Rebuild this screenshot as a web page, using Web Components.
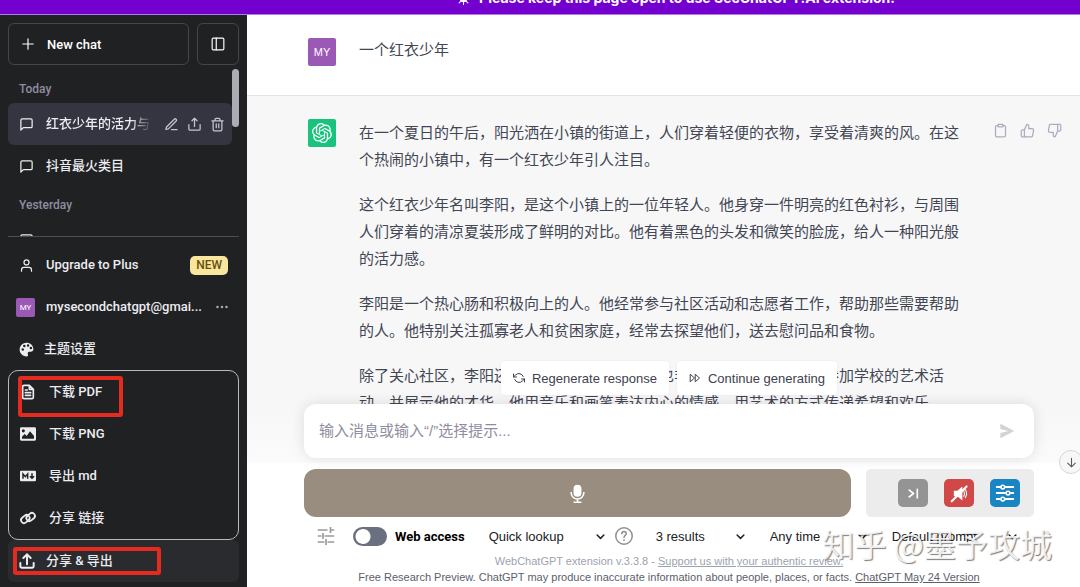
<!DOCTYPE html>
<html lang="zh-CN">
<head>
  <meta charset="utf-8">
  <title>ChatGPT</title>
  <style>
    html, body {
      margin: 0;
      height: 100%;
    }
    body {
      font-family: "Liberation Sans", "Noto Sans CJK SC", sans-serif;
      background: #fff;
      overflow: hidden;
    }
  </style>
</head>
<body>
  <chat-app></chat-app>

  <script>
    const ICONS = {
      plus: ['0 0 24 24', '<path d="M12 3v18M3 12h18"/>'],
      panel: ['0 0 24 24', '<rect x="2" y="2" width="20" height="20" rx="2"/><path d="M9 2v20"/>'],
      chat: ['0 0 24 24', '<path d="M21 15a2 2 0 0 1-2 2H7l-4 4V5a2 2 0 0 1 2-2h14a2 2 0 0 1 2 2z"/>'],
      edit: ['0 0 24 24', '<path d="M12 20h9M16.5 3.5a2.1 2.1 0 0 1 3 3L7 19l-4 1 1-4z"/>'],
      share: ['0 0 24 24', '<path d="M3 12v7a2 2 0 0 0 2 2h14a2 2 0 0 0 2-2v-7M16 6l-4-4-4 4M12 2v13"/>'],
      trash: ['0 0 24 24', '<path d="M3 6h18M19 6v14a2 2 0 0 1-2 2H7a2 2 0 0 1-2-2V6M8 6V4a2 2 0 0 1 2-2h4a2 2 0 0 1 2 2v2M10 11v6M14 11v6"/>'],
      user: ['0 0 24 24', '<path d="M20 21v-2a4 4 0 0 0-4-4H8a4 4 0 0 0-4 4v2"/><circle cx="12" cy="7" r="4"/>'],
      dots: ['0 0 24 24', '<g fill="currentColor" stroke="none"><circle cx="3" cy="12" r="2.500"/><circle cx="12" cy="12" r="2.500"/><circle cx="21" cy="12" r="2.500"/></g>'],
      palette: ['0 0 24 24', '<path fill="currentColor" stroke="none" fill-rule="evenodd" d="M12 1C5.900 1 1 5.900 1 12s4.900 11 11 11c1.700 0 2.700-1.200 2.400-2.800-.4-1.800-.8-2.700.2-3.800 1-1.200 2.500-.9 4.200-.9 2.600 0 4.200-1.400 4.200-4C23 5.300 18 1 12 1zM6 14a2 2 0 1 1 0-4 2 2 0 0 1 0 4zm2.500-5.500a2 2 0 1 1 0-4 2 2 0 0 1 0 4zm6-1a2 2 0 1 1 0-4 2 2 0 0 1 0 4zm4.500 4a2 2 0 1 1 0-4 2 2 0 0 1 0 4z"/>'],
      file: ['0 0 24 24', '<path stroke-width="2.500" d="M14 2H6a2 2 0 0 0-2 2v16a2 2 0 0 0 2 2h12a2 2 0 0 0 2-2V8zM14 2v6h6M8 9h3M8 13h8M8 17h8"/>'],
      image: ['0 0 24 24', '<path fill="currentColor" stroke="none" fill-rule="evenodd" d="M2 2h20a2 2 0 0 1 2 2v16a2 2 0 0 1-2 2H2a2 2 0 0 1-2-2V4a2 2 0 0 1 2-2zm3 3a2.300 2.300 0 1 0 0 4.600A2.300 2.300 0 0 0 5 5zM3 19h18v-4l-6-7-5 7-3-3-4 4z"/>'],
      markdown: ['0 0 24 24', '<rect x="0" y="4" width="24" height="16" rx="2" fill="currentColor" stroke="none"/><path stroke="#202123" stroke-width="2.200" stroke-linecap="butt" stroke-linejoin="miter" d="M4.500 16V9l3.500 4 3.500-4v7M18 8v7M15 12.500l3 3 3-3"/>'],
      link: ['0 0 24 24', '<g stroke-width="2.600"><rect x="1" y="9" width="14" height="9" rx="4.500" transform="rotate(-40 8 13.500)"/><rect x="9" y="6" width="14" height="9" rx="4.500" transform="rotate(-40 16 10.500)"/></g>'],
      upload: ['0 0 24 24', '<path stroke-width="3" d="M2 15v5a2 2 0 0 0 2 2h16a2 2 0 0 0 2-2v-5M6.500 7.500L12 2l5.500 5.500M12 2v15"/>'],
      openai: ['0 0 24 24', '<path fill="currentColor" stroke="none" d="M22.2819 9.8211a5.9847 5.9847 0 0 0-.5157-4.9108 6.0462 6.0462 0 0 0-6.5098-2.9A6.0651 6.0651 0 0 0 4.9807 4.1818a5.9847 5.9847 0 0 0-3.9977 2.9 6.0462 6.0462 0 0 0 .7427 7.0966 5.98 5.98 0 0 0 .511 4.9107 6.051 6.051 0 0 0 6.5146 2.9001A5.9847 5.9847 0 0 0 13.2599 24a6.0557 6.0557 0 0 0 5.7718-4.2058 5.9894 5.9894 0 0 0 3.9977-2.9001 6.0557 6.0557 0 0 0-.7475-7.0729zm-9.022 12.6081a4.4755 4.4755 0 0 1-2.8764-1.0408l.1419-.0804 4.7783-2.7582a.7948.7948 0 0 0 .3927-.6813v-6.7369l2.02 1.1686a.071.071 0 0 1 .038.052v5.5826a4.504 4.504 0 0 1-4.4945 4.4944zm-9.6607-4.1254a4.4708 4.4708 0 0 1-.5346-3.0137l.142.0852 4.783 2.7582a.7712.7712 0 0 0 .7806 0l5.8428-3.3685v2.3324a.0804.0804 0 0 1-.0332.0615L9.74 19.9502a4.4992 4.4992 0 0 1-6.1408-1.6464zM2.3408 7.8956a4.485 4.485 0 0 1 2.3655-1.9728V11.6a.7664.7664 0 0 0 .3879.6765l5.8144 3.3543-2.0201 1.1685a.0757.0757 0 0 1-.071 0l-4.8303-2.7865A4.504 4.504 0 0 1 2.3408 7.872zm16.5963 3.8558L13.1038 8.364 15.1192 7.2a.0757.0757 0 0 1 .071 0l4.8303 2.7913a4.4944 4.4944 0 0 1-.6765 8.1042v-5.6772a.79.79 0 0 0-.407-.667zm2.0107-3.0231l-.142-.0852-4.7735-2.7818a.7759.7759 0 0 0-.7854 0L9.409 9.2297V6.8974a.0662.0662 0 0 1 .0284-.0615l4.8303-2.7866a4.4992 4.4992 0 0 1 6.6802 4.66zM8.3065 12.863l-2.02-1.1638a.0804.0804 0 0 1-.038-.0567V6.0742a4.4992 4.4992 0 0 1 7.3757-3.4537l-.142.0805L8.704 5.459a.7948.7948 0 0 0-.3927.6813zm1.0976-2.3654l2.602-1.4998 2.6069 1.4998v2.9994l-2.5974 1.4997-2.6067-1.4997Z"/>'],
      clipboard: ['0 0 24 24', '<path d="M16 4h2a2 2 0 0 1 2 2v14a2 2 0 0 1-2 2H6a2 2 0 0 1-2-2V6a2 2 0 0 1 2-2h2"/><rect x="8" y="2" width="8" height="4" rx="1"/>'],
      up: ['0 0 24 24', '<path d="M14 9V5a3 3 0 0 0-3-3l-4 9v11h11.280a2 2 0 0 0 2-1.700l1.380-9a2 2 0 0 0-2-2.300zM7 22H4a2 2 0 0 1-2-2v-7a2 2 0 0 1 2-2h3"/>'],
      down: ['0 0 24 24', '<path d="M10 15v4a3 3 0 0 0 3 3l4-9V2H5.720a2 2 0 0 0-2 1.700l-1.380 9a2 2 0 0 0 2 2.300zM17 2h2.670A2.310 2.310 0 0 1 22 4v7a2.310 2.310 0 0 1-2.330 2H17"/>'],
      refresh: ['0 0 24 24', '<path d="M1 4v6h6M23 20v-6h-6M20.490 9A9 9 0 0 0 5.640 5.640L1 10m22 4-4.640 4.360A9 9 0 0 1 3.510 15"/>'],
      forward: ['0 0 24 24', '<path d="M3 5l8 7-8 7zM13 5l8 7-8 7z"/>'],
      send: ['0 0 24 24', '<path fill="currentColor" stroke="none" d="M2 1l21 11L2 23v-8l12-3L2 9z"/>'],
      arrow: ['0 0 24 24', '<path d="M12 4v16M5 13l7 7 7-7"/>'],
      mic: ['0 0 24 24', '<rect x="7" y="1" width="10" height="15" rx="5" fill="currentColor" stroke="none"/><path stroke-linecap="butt" d="M4 10v1a8 8 0 0 0 16 0v-1M12 19v4M7 23h10"/>'],
      skip: ['0 0 24 24', '<path stroke-width="3" stroke-linecap="butt" d="M3 5l9 7-9 7M19 3v18"/>'],
      mute: ['0 0 24 24', '<path fill="currentColor" stroke="none" d="M4 8h5l7-6v20l-7-6H4z"/><path stroke-width="3" d="M1 23L22 2"/><path stroke-width="1.500" d="M18 8q2 4 0 8M20 6q4 6 0 12"/>'],
      options: ['0 0 24 24', '<path stroke-width="2.500" d="M1 4h5M12 4h11M1 12h11M20 12h3M1 20h4M12 20h11"/><circle cx="9" cy="4" r="2.500"/><circle cx="16" cy="12" r="2.500"/><circle cx="9" cy="20" r="2.500"/>'],
      tune: ['0 0 24 24', '<path stroke-linecap="butt" stroke-width="2.200" d="M1 4h13M18 4h5M18 0v8M1 12h5M10 12h13M8 8v8M1 20h9M14 20h9M12 16v8"/>'],
      help: ['0 0 24 24', '<circle cx="12" cy="12" r="11"/><path d="M9 9a3 3 0 0 1 6 0c0 2-3 2.500-3 5M12 17v1"/>'],
      chevron: ['0 0 24 24', '<path stroke-width="4" d="M3 8l9 9 9-9"/>'],
      bulb: ['0 0 24 24', '<path d="M12 1v22M1 12h22M4 4l16 16M20 4L4 20"/><circle cx="12" cy="12" r="6" fill="currentColor"/>']
    };

    class BaseElement extends HTMLElement {
      constructor() {
        super();
        this.attachShadow({ mode: 'open' });
      }

      connectedCallback() {
        this.shadowRoot.innerHTML = `<style>${this.css()}</style>${this.template()}`;
      }
    }

    class UiIcon extends BaseElement {
      css() {
        return `
          :host { display: block; flex: none; width: var(--size, 16px); height: var(--size, 16px); }
          svg { display: block; width: 100%; height: 100%; overflow: visible; }
        `;
      }

      template() {
        const [box, body] = ICONS[this.getAttribute('name')];
        return `<svg viewBox="${box}" fill="none" stroke="currentColor" stroke-width="2" stroke-linecap="round" stroke-linejoin="round" aria-hidden="true">${body}</svg>`;
      }
    }
    customElements.define('ui-icon', UiIcon);

    class NoticeBar extends BaseElement {
      css() {
        return `
          :host {
            display: flex;
            justify-content: center;
            align-items: flex-end;
            flex: none;
            height: 14px;
            padding-left: 272px;
            overflow: hidden;
            background: #7400cf;
            border-bottom: 1px solid #b27be0;
            color: #fff;
            font-family: Inter, sans-serif;
            font-size: 14px;
            font-weight: 700;
          }
          p { display: flex; align-items: center; gap: 9px; margin: 0; padding: 0 0 6px; line-height: 20px; white-space: nowrap; }
          ui-icon { --size: 13px; }
        `;
      }

      template() {
        return `<p><ui-icon name="bulb"></ui-icon><slot></slot></p>`;
      }
    }
    customElements.define('notice-bar', NoticeBar);

    class UserBadge extends BaseElement {
      css() {
        return `
          :host {
            display: flex;
            align-items: center;
            justify-content: center;
            flex: none;
            width: var(--badge, 28px);
            height: var(--badge, 28px);
            border-radius: 2px;
            background: var(--badge-bg, #9b59b6);
            color: #fff;
            font-size: var(--badge-font, 11px);
            font-weight: 400;
          }
        `;
      }

      template() {
        return `<slot></slot>`;
      }
    }
    customElements.define('user-badge', UserBadge);

    // One line of the sidebar: icon, label and whatever is slotted at the end
    class NavRow extends BaseElement {
      css() {
        return `
          :host { display: flex; align-items: center; height: 42px; border-radius: 6px; padding: 0 11px; box-sizing: border-box; }
          :host([active]) { background: #343541; }
          :host([hover]) { background: #2a2b2e; }
          button {
            display: flex;
            align-items: center;
            flex: 1;
            min-width: 0;
            height: 100%;
            padding: 0;
            border: 0;
            background: none;
            color: inherit;
            font: inherit;
            text-align: left;
          }
          .lead { display: flex; flex: none; width: var(--lead, 27px); }
          .lead ui-icon { --size: var(--lead-icon, 15px); }
          .text { flex: 1; min-width: 0; overflow: hidden; white-space: nowrap; line-height: 20px; }
          :host([active]) .text {
            -webkit-mask-image: linear-gradient(to right, #000 80%, transparent);
            mask-image: linear-gradient(to right, #000 80%, transparent);
          }
        `;
      }

      template() {
        const icon = this.getAttribute('icon');
        return `
          <button type="button">
            <span class="lead"><slot name="lead">${icon ? `<ui-icon name="${icon}"></ui-icon>` : ''}</slot></span>
            <span class="text"><slot></slot></span>
          </button>
          <slot name="end"></slot>
        `;
      }
    }
    customElements.define('nav-row', NavRow);

    class SideBar extends BaseElement {
      css() {
        return `
          :host {
            display: flex;
            flex-direction: column;
            flex: none;
            width: 247px;
            box-sizing: border-box;
            padding: 8px 8px 5px;
            background: #202123;
            color: #ececf1;
            font-family: Roboto, "Noto Sans CJK SC", sans-serif;
            font-size: 13px;
            font-weight: 500;
            overflow: hidden;
          }
          header { display: flex; gap: 8px; flex: none; }
          header button {
            display: flex;
            align-items: center;
            height: 42px;
            box-sizing: border-box;
            border: 1px solid #45464a;
            border-radius: 6px;
            background: none;
            color: #fff;
            font: inherit;
            padding: 0 13px;
            gap: 12px;
          }
          header button:first-child { flex: 1; padding-left: 12px; }
          header ui-icon { --size: 14px; }
          .history { display: flex; flex: 1; min-height: 0; overflow: hidden; }
          .list { flex: 1; min-width: 0; padding-top: 12px; }
          h2 { margin: 0; padding: 0 11px 2px; font-size: 12px; font-weight: 500; line-height: 24px; color: #8e8ea0; }
          .group { margin-bottom: 6px; }
          .thumb { flex: none; width: 7px; height: 58px; margin-top: 4px; border-radius: 4px; background: #acacb5; }
          .tools { display: flex; gap: 8px; margin-left: 12px; color: #c5c5d2; }
          .tools button { display: flex; padding: 0; border: 0; background: none; color: inherit; }
          .tools ui-icon { --size: 15px; }
          .list nav-row[active] { padding-right: 7px; }
          nav { flex: none; border-top: 1px solid #4d4d4f; padding-top: 7px; }
          .new { padding: 0 6px; border-radius: 5px; background: #fae69e; color: #66510f; font-size: 12px; line-height: 19px; }
          user-badge { --badge: 19px; --badge-font: 8px; margin-left: -3px; }
          .more { --size: 12px; color: #acacb5; }
          .export { border: 1px solid #b9b9bd; border-radius: 10px; position: relative; }
          .export nav-row { --lead: 29px; --lead-icon: 16px; }
          .theme { --lead: 25px; }
          .share { position: relative; --lead-icon: 16px; }
          .mark { position: absolute; box-sizing: border-box; border: 4px solid #e52b20; border-radius: 3px; pointer-events: none; }
          .mark.pdf { left: 9px; top: 5px; width: 105px; height: 41px; }
          .mark.out { left: 5px; top: 7px; width: 148px; height: 28px; }
        `;
      }

      template() {
        return `
          <header>
            <button type="button"><ui-icon name="plus"></ui-icon>New chat</button>
            <button type="button" aria-label="Hide sidebar"><ui-icon name="panel"></ui-icon></button>
          </header>
          <div class="history">
            <div class="list">
              <div class="group">
                <h2>Today</h2>
                <nav-row active icon="chat">红衣少年的活力与
                  <span class="tools" slot="end">
                    <button type="button" aria-label="Edit"><ui-icon name="edit"></ui-icon></button>
                    <button type="button" aria-label="Share"><ui-icon name="share"></ui-icon></button>
                    <button type="button" aria-label="Delete"><ui-icon name="trash"></ui-icon></button>
                  </span>
                </nav-row>
                <nav-row icon="chat">抖音最火类目</nav-row>
              </div>
              <div class="group">
                <h2>Yesterday</h2>
                <nav-row icon="chat"></nav-row>
              </div>
            </div>
            <div class="thumb"></div>
          </div>
          <nav>
            <nav-row icon="user">Upgrade to Plus<span class="new" slot="end">NEW</span></nav-row>
            <nav-row><user-badge slot="lead">MY</user-badge>mysecondchatgpt@gmai...<ui-icon class="more" slot="end" name="dots"></ui-icon></nav-row>
            <nav-row class="theme" icon="palette">主题设置</nav-row>
            <div class="export">
              <nav-row icon="file">下载 PDF</nav-row>
              <nav-row icon="image">下载 PNG</nav-row>
              <nav-row icon="markdown">导出 md</nav-row>
              <nav-row icon="link">分享 链接</nav-row>
              <span class="mark pdf"></span>
            </div>
            <nav-row class="share" hover icon="upload">分享 &amp; 导出<span class="mark out" slot="end"></span></nav-row>
          </nav>
        `;
      }
    }
    customElements.define('side-bar', SideBar);

    class ChatMessage extends BaseElement {
      css() {
        return `
          :host {
            display: grid;
            grid-template-columns: 28px minmax(0, 1fr) 68px;
            column-gap: 23px;
            align-items: start;
            padding: 23px 19px 29px 61px;
            border-bottom: 1px solid #e3e3e5;
            color: #424653;
            font-size: 15px;
            line-height: 24px;
          }
          :host([role="assistant"]) { background: #f7f7f8; border: 0; line-height: 27px; }
          user-badge { --badge-bg: var(--avatar); }
          .icon { --size: 20px; }
          .tools { display: flex; gap: 12px; padding-top: 4px; color: #acacbe; }
          .tools button { display: flex; padding: 0; border: 0; background: none; color: inherit; }
          .tools ui-icon { --size: 15px; }
        `;
      }

      template() {
        const bot = this.getAttribute('role') === 'assistant';
        return `
          <user-badge style="--avatar: ${bot ? '#19c37d' : '#9b59b6'}">${bot ? '<ui-icon class="icon" name="openai"></ui-icon>' : 'MY'}</user-badge>
          <div><slot></slot></div>
          ${bot ? `
            <div class="tools">
              <button type="button" aria-label="Copy"><ui-icon name="clipboard"></ui-icon></button>
              <button type="button" aria-label="Good"><ui-icon name="up"></ui-icon></button>
              <button type="button" aria-label="Bad"><ui-icon name="down"></ui-icon></button>
            </div>` : ''}
        `;
      }
    }
    customElements.define('chat-message', ChatMessage);

    class OptionSelect extends BaseElement {
      css() {
        return `
          :host { display: grid; align-items: center; color: #202123; }
          select {
            grid-area: 1 / 1;
            appearance: none;
            width: 100%;
            height: 24px;
            padding: 0 20px 0 0;
            border: 0;
            background: none;
            color: inherit;
            font: 13px "Liberation Sans", sans-serif;
          }
          ui-icon { --size: 9px; grid-area: 1 / 1; justify-self: end; pointer-events: none; }
        `;
      }

      template() {
        const value = this.getAttribute('value');
        return `<select aria-label="${this.getAttribute('label')}"><option>${value}</option></select><ui-icon name="chevron"></ui-icon>`;
      }
    }
    customElements.define('option-select', OptionSelect);

    class ChatComposer extends BaseElement {
      css() {
        return `
          :host {
            display: block;
            position: absolute;
            left: 0;
            right: 0;
            bottom: 0;
            padding: 0 46px 2px 57px;
            background: linear-gradient(to bottom, transparent 43px, #fff 160px);
          }
          button { font: inherit; border: 0; }
          .actions { display: flex; justify-content: center; gap: 8px; }
          .actions button {
            display: flex;
            align-items: center;
            gap: 7px;
            height: 34px;
            padding: 0 12px;
            border-radius: 4px;
            background: #fff;
            color: #40414f;
            font-size: 13px;
            box-shadow: 0 0 3px rgba(0, 0, 0, .06);
          }
          .actions ui-icon { --size: 12px; }
          .prompt {
            display: flex;
            align-items: center;
            height: 54px;
            margin-top: 9px;
            padding: 0 19px 0 15px;
            border-radius: 12px;
            background: #fff;
            box-shadow: 0 0 14px rgba(0, 0, 0, .12);
          }
          textarea {
            flex: 1;
            height: 24px;
            padding: 0;
            border: 0;
            outline: 0;
            resize: none;
            background: none;
            font: 15px/24px "Liberation Sans", "Noto Sans CJK SC", sans-serif;
          }
          textarea::placeholder { color: #8e8ea0; }
          .prompt button { display: flex; padding: 0; background: none; color: #d2d2d8; }
          .voice { display: flex; gap: 15px; margin-top: 11px; height: 48px; }
          .talk { display: flex; align-items: center; justify-content: center; flex: 1; border-radius: 12px; background: #998d7f; color: #fff; }
          .talk ui-icon { --size: 19px; }
          .panel { display: flex; align-items: center; gap: 16px; padding: 0 14px 0 32px; border-radius: 5px; background: #ececec; }
          .panel button { display: flex; align-items: center; justify-content: center; width: 30px; height: 28px; padding: 0; border-radius: 5px; color: #fff; }
          .skip { --size: 13px; background: #949494; }
          .mute { --size: 17px; background: #d04848; }
          .opts { --size: 18px; background: #1985c3; }
          .settings { display: flex; align-items: center; box-sizing: border-box; height: 36px; padding: 2px 17px 0 13px; font-size: 13px; }
          .tune { --size: 18px; color: #9a9a9f; margin-right: 18px; }
          .access { display: flex; align-items: center; gap: 8px; font-family: Roboto, sans-serif; font-weight: 700; margin-right: 24px; white-space: nowrap; }
          .access input {
            appearance: none;
            width: 34px;
            height: 19px;
            margin: 0;
            border-radius: 10px;
            border: 2px solid #6b7080;
            background: radial-gradient(circle at 8px 50%, #fff 7px, #6b7080 8px);
          }
          .lookup { width: 116px; }
          .help { --size: 18px; color: #8f8f95; margin: 0 23px 0 10px; }
          .results { width: 89px; margin-right: 25px; }
          .time { width: 97px; margin-right: 25px; }
          .default { flex: 1; }
          p { margin: 0; text-align: center; font-size: 11px; line-height: 16px; white-space: nowrap; color: #5c5e6b; }
          p.ext { color: #9ca3b0; }
          a { color: inherit; }
        `;
      }

      template() {
        return `
          <div class="actions">
            <button type="button"><ui-icon name="refresh"></ui-icon>Regenerate response</button>
            <button type="button"><ui-icon name="forward"></ui-icon>Continue generating</button>
          </div>
          <div class="prompt">
            <textarea rows="1" aria-label="Message" placeholder="输入消息或输入“/”选择提示..."></textarea>
            <button type="button" aria-label="Send"><ui-icon name="send"></ui-icon></button>
          </div>
          <div class="voice">
            <button class="talk" type="button" aria-label="Speak"><ui-icon name="mic"></ui-icon></button>
            <div class="panel">
              <button class="skip" type="button" aria-label="Skip"><ui-icon name="skip"></ui-icon></button>
              <button class="mute" type="button" aria-label="Mute"><ui-icon name="mute"></ui-icon></button>
              <button class="opts" type="button" aria-label="Settings"><ui-icon name="options"></ui-icon></button>
            </div>
          </div>
          <div class="settings">
            <ui-icon class="tune" name="tune"></ui-icon>
            <label class="access"><input type="checkbox" role="switch">Web access</label>
            <option-select class="lookup" label="Search mode" value="Quick lookup"></option-select>
            <ui-icon class="help" name="help"></ui-icon>
            <option-select class="results" label="Results" value="3 results"></option-select>
            <option-select class="time" label="Time" value="Any time"></option-select>
            <option-select class="default" label="Prompt" value="Default prompt"></option-select>
          </div>
          <p class="ext">WebChatGPT extension v.3.3.8 - <a href="#">Support us with your authentic review.</a></p>
          <p>Free Research Preview. ChatGPT may produce inaccurate information about people, places, or facts. <a href="#">ChatGPT May 24 Version</a></p>
        `;
      }
    }
    customElements.define('chat-composer', ChatComposer);

    class ChatApp extends BaseElement {
      css() {
        return `
          :host { display: flex; flex-direction: column; height: 100vh; overflow: hidden; }
          .body { display: flex; flex: 1; min-height: 0; }
          main { display: flex; flex-direction: column; position: relative; flex: 1; min-width: 0; overflow: hidden; }
          chat-message { flex: none; }
          p { margin: 0 0 18px; }
          .to-end {
            position: absolute;
            right: -3px;
            bottom: 113px;
            display: flex;
            align-items: center;
            justify-content: center;
            width: 24px;
            height: 24px;
            padding: 0;
            border: 1px solid #d6d6da;
            border-radius: 50%;
            background: #f7f7f8;
            color: #565869;
            --size: 13px;
          }
          .watermark {
            position: absolute;
            right: 28px;
            bottom: 24px;
            font: 32px/40px "Noto Sans CJK SC", sans-serif;
            color: rgba(255, 255, 255, .85);
            text-shadow: 1px 1px 1px rgba(0, 0, 0, .5);
            white-space: nowrap;
            pointer-events: none;
          }
        `;
      }

      template() {
        return `
          <notice-bar>Please keep this page open to use SecChatGPT.AI extension.</notice-bar>
          <div class="body">
            <side-bar></side-bar>
            <main>
              <chat-message role="user">一个红衣少年</chat-message>
              <chat-message role="assistant">
                <p>在一个夏日的午后，阳光洒在小镇的街道上，人们穿着轻便的衣物，享受着清爽的风。在这个热闹的小镇中，有一个红衣少年引人注目。</p>
                <p>这个红衣少年名叫李阳，是这个小镇上的一位年轻人。他身穿一件明亮的红色衬衫，与周围人们穿着的清凉夏装形成了鲜明的对比。他有着黑色的头发和微笑的脸庞，给人一种阳光般的活力感。</p>
                <p>李阳是一个热心肠和积极向上的人。他经常参与社区活动和志愿者工作，帮助那些需要帮助的人。他特别关注孤寡老人和贫困家庭，经常去探望他们，送去慰问品和食物。</p>
                <p>除了关心社区，李阳还积极参与文艺活动。他也非常喜欢唱歌，经常会参加学校的艺术活动，并展示他的才华。他用音乐和画笔表达内心的情感，用艺术的方式传递希望和欢乐。</p>
              </chat-message>
              <chat-composer></chat-composer>
              <button class="to-end" type="button" aria-label="Scroll to bottom"><ui-icon name="arrow"></ui-icon></button>
              <div class="watermark">知乎 @墨予攻城</div>
            </main>
          </div>
        `;
      }
    }
    customElements.define('chat-app', ChatApp);
  </script>
</body>
</html>
